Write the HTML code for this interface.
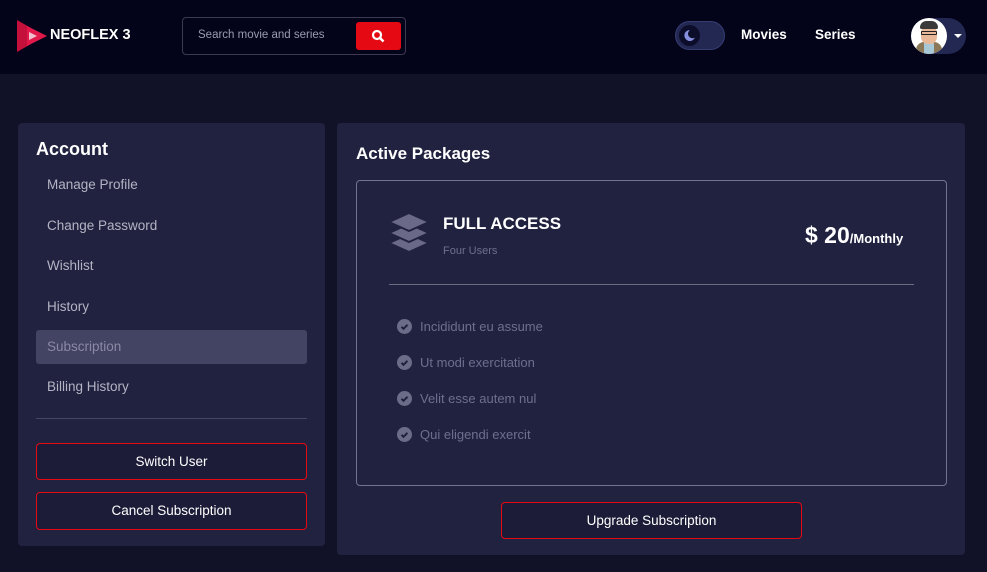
<!DOCTYPE html>
<html><head><style>
*{box-sizing:border-box;margin:0;padding:0}
body{width:987px;height:572px;background:#111228;font-family:"Liberation Sans",sans-serif;position:relative;overflow:hidden;color:#fff}
.hdr{position:absolute;left:0;top:0;width:987px;height:74px;background:#03041a}
.abs{position:absolute}
.card{position:absolute;background:#212240;border-radius:4px}
.menu{position:absolute;left:47px;font-size:13.5px;color:#b4b4c4}
.btn{position:absolute;border:1px solid #e50914;border-radius:4px;background:#1c1c38;color:#fff;font-size:13.5px;text-align:center}
.feat{position:absolute;left:397px;font-size:13px;color:#6e6f8e}
.chk{display:inline-block;width:15px;height:15px;vertical-align:middle;margin-right:8px;position:relative;top:-1px}
</style></head><body>
<div class="hdr">
<svg class="abs" style="left:17px;top:20px" width="30" height="32" viewBox="0 0 30 32"><polygon points="0,0 14,8 14,24 0,32" fill="#c4103a"/><polygon points="10,6 30,16 10,26" fill="#e2184a"/><polygon points="12,12 20,16 12,20" fill="#f0c0cc"/></svg>
<div class="abs" style="left:50px;top:27px;font-size:14.5px;font-weight:bold">NEOFLEX 3</div>
<div class="abs" style="left:182px;top:17px;width:224px;height:38px;border:1px solid #3a3b52;border-radius:4px"></div>
<div class="abs" style="left:198px;top:29px;font-size:11.5px;color:#9a9bb0">Search movie and series</div>
<div class="abs" style="left:356px;top:22px;width:45px;height:28px;background:#e50914;border-radius:3px"></div>
<svg class="abs" style="left:371px;top:29px" width="14" height="14" viewBox="0 0 14 14"><circle cx="6" cy="6" r="4" stroke="#fff" stroke-width="2.2" fill="none"/><line x1="9" y1="9" x2="12.5" y2="12.5" stroke="#fff" stroke-width="2.5"/></svg>
<div class="abs" style="left:675px;top:21px;width:50px;height:29px;border-radius:15px;background:#232853;border:1px solid #353d72"></div>
<div class="abs" style="left:679px;top:25px;width:21px;height:21px;border-radius:50%;background:#0c0d2a"></div>
<svg class="abs" style="left:683px;top:29px" width="13" height="13" viewBox="0 0 13 13"><path d="M7 1a5.5 5.5 0 1 0 5 7.5A4.5 4.5 0 0 1 7 1z" fill="#8790e0"/></svg>
<div class="abs" style="left:741px;top:27px;font-size:13.5px;font-weight:bold">Movies</div>
<div class="abs" style="left:815px;top:27px;font-size:13.5px;font-weight:bold">Series</div>
<div class="abs" style="left:911px;top:18px;width:55px;height:36px;border-radius:18px;background:#232853"></div>
<div class="abs" style="left:911px;top:18px;width:36px;height:36px;border-radius:50%;background:#fff;overflow:hidden">
<div class="abs" style="left:5px;top:24px;width:26px;height:16px;border-radius:8px 8px 0 0;background:#8a7858"></div>
<div class="abs" style="left:13px;top:24px;width:10px;height:12px;background:#a8c8d8"></div>
<div class="abs" style="left:10px;top:8px;width:16px;height:18px;border-radius:7px;background:#e8b898"></div>
<div class="abs" style="left:9px;top:3px;width:18px;height:8px;border-radius:8px 8px 2px 2px;background:#3a3a3a"></div>
<div class="abs" style="left:10px;top:13px;width:16px;height:4px;border:1px solid #222;border-radius:1px"></div>
</div>
<div class="abs" style="left:954px;top:34px;width:0;height:0;border-left:4px solid transparent;border-right:4px solid transparent;border-top:4px solid #fff"></div>
</div>

<div class="card" style="left:18px;top:123px;width:307px;height:423px"></div>
<div class="abs" style="left:36px;top:139px;font-size:18px;font-weight:bold">Account</div>
<div class="menu" style="top:177px">Manage Profile</div>
<div class="menu" style="top:218px">Change Password</div>
<div class="menu" style="top:258px">Wishlist</div>
<div class="menu" style="top:299px">History</div>
<div class="abs" style="left:36px;top:330px;width:271px;height:34px;background:#434363;border-radius:3px"></div>
<div class="menu" style="top:339px;color:#8a8aa4">Subscription</div>
<div class="menu" style="top:379px">Billing History</div>
<div class="abs" style="left:36px;top:418px;width:271px;height:1px;background:#45465f"></div>
<div class="btn" style="left:36px;top:443px;width:271px;height:37px;line-height:35px">Switch User</div>
<div class="btn" style="left:36px;top:492px;width:271px;height:38px;line-height:36px">Cancel Subscription</div>

<div class="card" style="left:337px;top:123px;width:628px;height:432px"></div>
<div class="abs" style="left:356px;top:144px;font-size:17px;font-weight:bold">Active Packages</div>
<div class="abs" style="left:356px;top:180px;width:591px;height:306px;border:1px solid #72738c;border-radius:4px"></div>
<svg class="abs" style="left:388px;top:212px" width="42" height="42" viewBox="0 0 42 42"><g fill="#6a6a88" stroke="#212240" stroke-width="2" stroke-linejoin="round"><path d="M21 22l20 9-20 9-20-9z"/><path d="M21 12l20 9-20 9-20-9z"/><path d="M21 1l20 9-20 9-20-9z"/></g></svg>
<div class="abs" style="left:443px;top:214px;font-size:17px;font-weight:bold">FULL ACCESS</div>
<div class="abs" style="left:443px;top:245px;font-size:11px;color:#6e6f8e">Four Users</div>
<div class="abs" style="left:805px;top:222px;font-size:23px;font-weight:bold">$ 20<span style="font-size:13px">/Monthly</span></div>
<div class="abs" style="left:389px;top:284px;width:525px;height:1px;background:#6b6c84"></div>
<div class="feat" style="top:319px"><svg class="chk" viewBox="0 0 15 15"><circle cx="7.5" cy="7.5" r="7.5" fill="#6b6c88"/><path d="M4.5 7.8l2 2 4-4" stroke="#212240" stroke-width="2" fill="none"/></svg>Incididunt eu assume</div>
<div class="feat" style="top:355px"><svg class="chk" viewBox="0 0 15 15"><circle cx="7.5" cy="7.5" r="7.5" fill="#6b6c88"/><path d="M4.5 7.8l2 2 4-4" stroke="#212240" stroke-width="2" fill="none"/></svg>Ut modi exercitation</div>
<div class="feat" style="top:391px"><svg class="chk" viewBox="0 0 15 15"><circle cx="7.5" cy="7.5" r="7.5" fill="#6b6c88"/><path d="M4.5 7.8l2 2 4-4" stroke="#212240" stroke-width="2" fill="none"/></svg>Velit esse autem nul</div>
<div class="feat" style="top:427px"><svg class="chk" viewBox="0 0 15 15"><circle cx="7.5" cy="7.5" r="7.5" fill="#6b6c88"/><path d="M4.5 7.8l2 2 4-4" stroke="#212240" stroke-width="2" fill="none"/></svg>Qui eligendi exercit</div>
<div class="btn" style="left:501px;top:502px;width:301px;height:37px;line-height:35px">Upgrade Subscription</div>
</body></html>
